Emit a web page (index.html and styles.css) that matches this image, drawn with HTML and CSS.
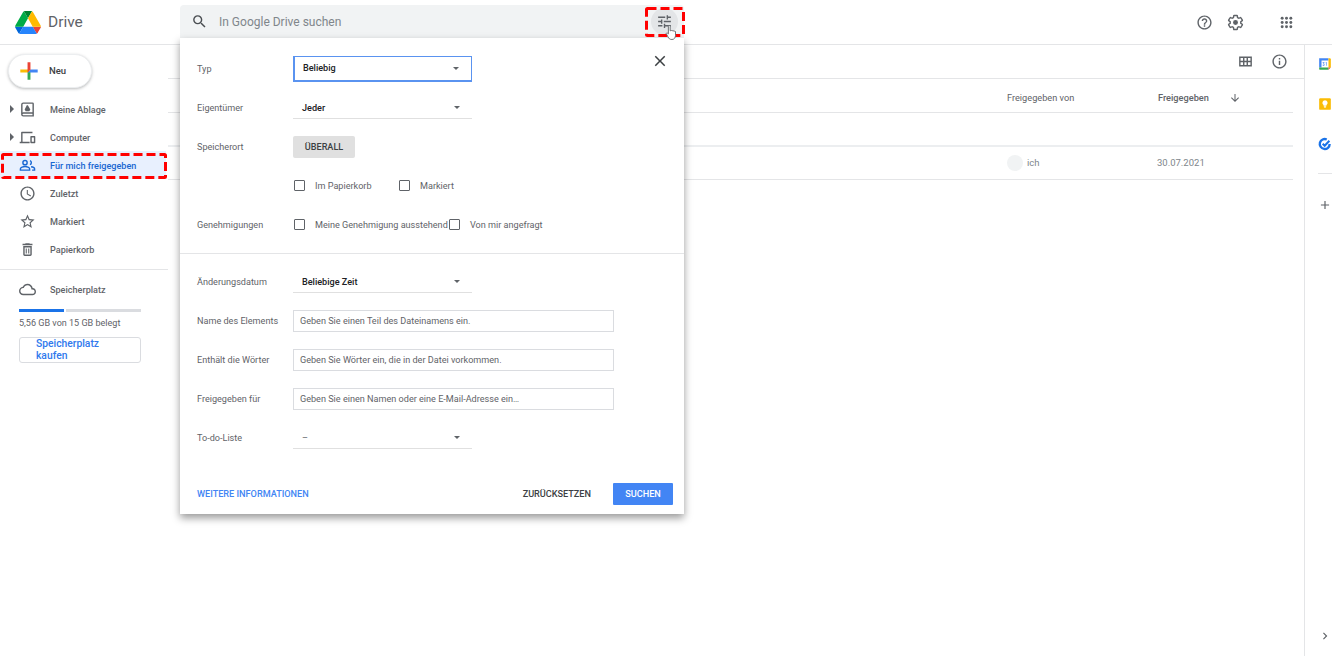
FILE: index.html
```html
<!DOCTYPE html>
<html lang="de">
<head>
  <meta charset="UTF-8">
  <title>Google Drive</title>
  <link rel="stylesheet" href="styles.css">
</head>
<body>
  <div class="app">
    <header class="topbar">
      <div class="brand">
        <svg class="logo" viewBox="0 0 87.3 78">
          <path d="m6.6 66.85 3.85 6.65c.8 1.4 1.95 2.5 3.3 3.3l13.75-23.8h-27.5c0 1.55.4 3.1 1.2 4.5z" fill="#0066da"/>
          <path d="m43.65 25-13.75-23.8c-1.35.8-2.5 1.9-3.3 3.3l-25.4 44a9.06 9.06 0 0 0 -1.2 4.5h27.5z" fill="#00ac47"/>
          <path d="m73.55 76.8c1.35-.8 2.5-1.9 3.3-3.3l1.6-2.75 7.65-13.25c.8-1.4 1.2-2.95 1.2-4.5h-27.502l5.852 11.5z" fill="#ea4335"/>
          <path d="m43.65 25 13.75-23.8c-1.35-.8-2.9-1.2-4.5-1.2h-18.5c-1.6 0-3.15.45-4.5 1.2z" fill="#00832d"/>
          <path d="m59.8 53h-32.3l-13.75 23.8c1.35.8 2.9 1.2 4.5 1.2h50.8c1.6 0 3.15-.45 4.5-1.2z" fill="#2684fc"/>
          <path d="m73.4 26.5-12.7-22c-.8-1.4-1.95-2.5-3.3-3.3l-13.75 23.8 16.15 28h27.45c0-1.55-.4-3.1-1.2-4.5z" fill="#ffba00"/>
        </svg>
        <span class="brand-name">Drive</span>
      </div>
      <div class="search">
        <svg class="icon search-icon" viewBox="0 0 24 24"><path d="M15.5 14h-.79l-.28-.27A6.471 6.471 0 0 0 16 9.5 6.5 6.5 0 1 0 9.5 16c1.61 0 3.09-.59 4.23-1.57l.27.28v.79l5 4.99L20.49 19l-4.99-5zm-6 0C7.01 14 5 11.99 5 9.5S7.01 5 9.5 5 14 7.01 14 9.5 11.99 14 9.5 14z"/></svg>
        <span class="search-text">In Google Drive suchen</span>
        <div class="tune">
          <span class="tune-circle">
            <svg class="icon-tune" viewBox="0 0 24 24"><path d="M3 17v2h6v-2H3zM3 5v2h10V5H3zm10 16v-2h8v-2h-8v-2h-2v6h2zM7 9v2H3v2h4v2h2V9H7zm14 4v-2H11v2h10zm-6-4h2V7h4V5h-4V3h-2v6z"/></svg>
          </span>
        </div>
      </div>
      <div class="top-actions">
        <svg class="icon help" viewBox="0 0 24 24"><path d="M11 18h2v-2h-2v2zm1-16C6.48 2 2 6.48 2 12s4.48 10 10 10 10-4.48 10-10S17.52 2 12 2zm0 18c-4.41 0-8-3.59-8-8s3.59-8 8-8 8 3.59 8 8-3.59 8-8 8zm0-14c-2.21 0-4 1.79-4 4h2c0-1.1.9-2 2-2s2 .9 2 2c0 2-3 1.75-3 5h2c0-2.25 3-2.5 3-5 0-2.21-1.79-4-4-4z"/></svg>
        <svg class="icon gear" viewBox="0 0 24 24">
          <path fill="none" stroke="#5f6368" stroke-width="2" d="M19.43 12.98c.04-.32.07-.64.07-.98s-.03-.66-.07-.98l2.11-1.65c.19-.15.24-.42.12-.64l-2-3.46c-.12-.22-.39-.3-.61-.22l-2.49 1c-.52-.4-1.08-.73-1.69-.98l-.38-2.65C14.46 2.18 14.25 2 14 2h-4c-.25 0-.46.18-.49.42l-.38 2.65c-.61.25-1.17.59-1.69.98l-2.49-1c-.23-.09-.49 0-.61.22l-2 3.46c-.13.22-.07.49.12.64l2.11 1.65c-.04.32-.07.65-.07.98s.03.66.07.98l-2.11 1.65c-.19.15-.24.42-.12.64l2 3.46c.12.22.39.3.61.22l2.49-1c.52.4 1.08.73 1.69.98l.38 2.65c.03.24.24.42.49.42h4c.25 0 .46-.18.49-.42l.38-2.65c.61-.25 1.17-.59 1.69-.98l2.49 1c.23.09.49 0 .61-.22l2-3.46c.12-.22.07-.49-.12-.64l-2.11-1.65z"/>
          <circle cx="12" cy="12" r="3.5"/>
        </svg>
        <svg class="icon apps" viewBox="0 0 24 24">
          <circle cx="4" cy="4" r="2.7"/><circle cx="12" cy="4" r="2.7"/><circle cx="20" cy="4" r="2.7"/>
          <circle cx="4" cy="12" r="2.7"/><circle cx="12" cy="12" r="2.7"/><circle cx="20" cy="12" r="2.7"/>
          <circle cx="4" cy="20" r="2.7"/><circle cx="12" cy="20" r="2.7"/><circle cx="20" cy="20" r="2.7"/>
        </svg>
      </div>
    </header>

    <div class="workspace">
      <aside class="sidebar">
        <button class="new-btn">
          <svg class="plus" viewBox="0 0 36 36">
            <path fill="#34a853" d="M16 16v14h4V20z"/>
            <path fill="#4285f4" d="M30 16H20l-4 4h14z"/>
            <path fill="#fbbc05" d="M6 16v4h10l4-4z"/>
            <path fill="#ea4335" d="M20 16V6h-4v14z"/>
          </svg>
          <span>Neu</span>
        </button>
        <nav class="nav">
          <div class="nav-item has-caret">
            <svg class="icon-nav" viewBox="0 0 24 24"><path d="M19 2H6a3 3 0 0 0-3 3v14a3 3 0 0 0 3 3h15V4a2 2 0 0 0-2-2zm0 18H6a1 1 0 0 1 0-2h13v2zm0-4H6a3 3 0 0 0-1 .2V5a1 1 0 0 1 1-1h13v12zM12.5 6l3.5 6-1.5 2.5h-5L8 12l3-6h1.5z"/></svg>
            <span>Meine Ablage</span>
          </div>
          <div class="nav-item has-caret">
            <svg class="icon-nav" viewBox="0 0 24 24"><path d="M1 20v-2h2V5a1 1 0 0 1 1-1h15v2H5v12h10v2H1zm16-10a1 1 0 0 0-1 1v8a1 1 0 0 0 1 1h5a1 1 0 0 0 1-1v-8a1 1 0 0 0-1-1h-5zm1 2h3v6h-3v-6z"/></svg>
            <span>Computer</span>
          </div>
          <div class="nav-item active">
            <svg class="icon-nav" viewBox="0 0 24 24">
              <circle cx="8.5" cy="8" r="3" fill="none" stroke="#1967d2" stroke-width="2"/>
              <path fill="none" stroke="#1967d2" stroke-width="2" d="M2 18.500v-2c0-1.800 4-3 6.500-3s6.500 1.200 6.500 3v2zM15.500 5.200a3 3 0 0 1 0 5.600M17 13.700c2.500.3 5 1.300 5 2.800v2h-3.500"/>
            </svg>
            <span>Für mich freigegeben</span>
          </div>
          <div class="nav-item">
            <svg class="icon-nav" viewBox="0 0 24 24"><path d="M11.990 2C6.470 2 2 6.480 2 12s4.470 10 9.990 10C17.520 22 22 17.520 22 12S17.520 2 11.990 2zM12 20c-4.420 0-8-3.580-8-8s3.580-8 8-8 8 3.580 8 8-3.580 8-8 8zm.500-13H11v6l5.250 3.150.750-1.230-4.500-2.670z"/></svg>
            <span>Zuletzt</span>
          </div>
          <div class="nav-item">
            <svg class="icon-nav" viewBox="0 0 24 24"><path d="M22 9.240l-7.190-.620L12 2 9.190 8.630 2 9.240l5.460 4.730L5.820 21 12 17.270 18.180 21l-1.630-7.030L22 9.240zM12 15.400l-3.760 2.270 1-4.280-3.320-2.880 4.380-.380L12 6.100l1.710 4.040 4.380.380-3.320 2.880 1 4.280L12 15.400z"/></svg>
            <span>Markiert</span>
          </div>
          <div class="nav-item">
            <svg class="icon-nav" viewBox="0 0 24 24"><path d="M6 19c0 1.100.900 2 2 2h8c1.100 0 2-.900 2-2V7H6v12zM8 9h8v10H8V9zm7.500-5l-1-1h-5l-1 1H5v2h14V4zM9.500 10.500h1.500v7H9.500zM13 10.500h1.500v7H13z"/></svg>
            <span>Papierkorb</span>
          </div>
        </nav>
        <div class="storage">
          <div class="storage-head">
            <svg class="icon-nav" viewBox="0 0 24 24"><path d="M19.350 10.040C18.670 6.590 15.640 4 12 4 9.110 4 6.600 5.640 5.350 8.040 2.340 8.360 0 10.910 0 14c0 3.310 2.690 6 6 6h13c2.760 0 5-2.240 5-5 0-2.640-2.050-4.780-4.650-4.960zM19 18H6c-2.210 0-4-1.790-4-4s1.790-4 4-4h.710C7.370 7.690 9.480 6 12 6c3.040 0 5.500 2.460 5.500 5.500v.500H19c1.660 0 3 1.340 3 3s-1.340 3-3 3z"/></svg>
            <span>Speicherplatz</span>
          </div>
          <div class="storage-bar"><div class="storage-used"></div></div>
          <div class="storage-text">5,56 GB von 15 GB belegt</div>
          <button class="buy-btn">Speicherplatz kaufen</button>
        </div>
      </aside>

      <main class="main">
        <div class="toolbar">
          <svg class="icon grid-icon" viewBox="0 0 24 24"><path d="M3 5v14h18V5H3zm2 2h3.500v4H5V7zm5.500 0h3v4h-3V7zm5 0H19v4h-3.500V7zM5 13h3.500v4H5v-4zm5.500 0h3v4h-3v-4zm5 0H19v4h-3.500v-4z"/></svg>
          <svg class="icon info-icon" viewBox="0 0 24 24"><path d="M11 7h2v2h-2zm0 4h2v6h-2zm1-9C6.480 2 2 6.480 2 12s4.480 10 10 10 10-4.480 10-10S17.520 2 12 2zm0 18c-4.410 0-8-3.590-8-8s3.590-8 8-8 8 3.590 8 8-3.590 8-8 8z"/></svg>
        </div>
        <div class="table">
          <div class="row head">
            <span class="col-by">Freigegeben von</span>
            <span class="col-date strong">Freigegeben</span>
            <svg class="arrow" viewBox="0 0 24 24"><path d="M20 12l-1.410-1.410L13 16.170V4h-2v12.170l-5.580-5.590L4 12l8 8 8-8z"/></svg>
          </div>
          <div class="row blank"></div>
          <div class="row file">
            <span class="col-by owner"><i class="avatar"></i><span class="cell-text">ich</span></span>
            <span class="col-date cell-text">30.07.2021</span>
          </div>
        </div>
      </main>

      <aside class="addons">
        <svg class="addon" viewBox="0 0 24 24">
          <path fill="#fff" d="M5 5h14v14H5z"/>
          <path fill="#4285f4" d="M2 2h16v4H6v12H2z"/>
          <path fill="#fbbc04" d="M18 2h2a2 2 0 0 1 2 2v14h-4z"/>
          <path fill="#34a853" d="M6 18h12v4H4a2 2 0 0 1-2-2v-2h4z"/>
          <path fill="#ea4335" d="M18 18h4l-4 4z"/>
          <path fill="#4285f4" d="M8 9h3v1.200l-1.300 1.300c1 .1 1.500.8 1.500 1.600 0 1-.800 1.700-1.800 1.700-.800 0-1.500-.400-1.700-1.200l.900-.300c.1.400.400.600.800.600s.800-.300.800-.800-.400-.800-1-.800h-.500v-.900l1.200-1.200H8zM14 9h1v6h-1v-4.700l-1 .400v-.900z"/>
        </svg>
        <svg class="addon" viewBox="0 0 24 24">
          <path fill="#fbbc04" d="M4 2h16a2 2 0 0 1 2 2v16a2 2 0 0 1-2 2H4a2 2 0 0 1-2-2V4a2 2 0 0 1 2-2z"/>
          <path fill="#fff" d="M12 5.500a4.500 4.500 0 0 0-2.500 8.200V15h5v-1.300A4.500 4.500 0 0 0 12 5.500zM10 16h4v1.500h-4zM11 18h2v1h-2z"/>
        </svg>
        <svg class="addon" viewBox="0 0 24 24">
          <path fill="none" stroke="#1a73e8" stroke-width="4" d="M20 12a8.500 8.500 0 1 1-5-7.700"/>
          <path fill="none" stroke="#1a73e8" stroke-width="3.500" d="M8 11.500l3.500 3.500 8-8.500"/>
        </svg>
        <div class="addon-sep"></div>
        <svg class="addon add" viewBox="0 0 24 24"><path d="M19 13h-6v6h-2v-6H5v-2h6V5h2v6h6z"/></svg>
        <svg class="addon expand" viewBox="0 0 24 24"><path d="M8.590 16.590L13.170 12 8.590 7.410 10 6l6 6-6 6z"/></svg>
      </aside>
    </div>

    <section class="dialog">
      <button class="dialog-close">
        <svg viewBox="0 0 24 24"><path d="M19 6.410L17.590 5 12 10.590 6.410 5 5 6.410 10.590 12 5 17.590 6.410 19 12 13.410 17.590 19 19 17.590 13.410 12z"/></svg>
      </button>
      <div class="form-top">
        <div class="form-row">
          <label>Typ</label>
          <div class="select focused"><b>Beliebig</b><i class="caret"></i></div>
        </div>
        <div class="form-row">
          <label>Eigentümer</label>
          <div class="select"><b>Jeder</b><i class="caret"></i></div>
        </div>
        <div class="form-row">
          <label>Speicherort</label>
          <button class="place-btn">ÜBERALL</button>
        </div>
        <div class="form-row">
          <label></label>
          <span class="check check-wide"><i class="box"></i>Im Papierkorb</span>
          <span class="check"><i class="box"></i>Markiert</span>
        </div>
        <div class="form-row">
          <label>Genehmigungen</label>
          <span class="check tight"><i class="box"></i>Meine Genehmigung ausstehend</span>
          <span class="check"><i class="box"></i>Von mir angefragt</span>
        </div>
      </div>
      <div class="form-bottom">
        <div class="form-row">
          <label>Änderungsdatum</label>
          <div class="select"><b>Beliebige Zeit</b><i class="caret"></i></div>
        </div>
        <div class="form-row">
          <label>Name des Elements</label>
          <div class="text-input">Geben Sie einen Teil des Dateinamens ein.</div>
        </div>
        <div class="form-row">
          <label>Enthält die Wörter</label>
          <div class="text-input">Geben Sie Wörter ein, die in der Datei vorkommen.</div>
        </div>
        <div class="form-row">
          <label>Freigegeben für</label>
          <div class="text-input">Geben Sie einen Namen oder eine E-Mail-Adresse ein…</div>
        </div>
        <div class="form-row">
          <label>To-do-Liste</label>
          <div class="select"><span class="dash">–</span><i class="caret"></i></div>
        </div>
      </div>
      <div class="dialog-foot">
        <a class="more">WEITERE INFORMATIONEN</a>
        <a class="reset">ZURÜCKSETZEN</a>
        <button class="submit">SUCHEN</button>
      </div>
    </section>

    <!-- annotations from the screenshot -->
    <svg class="mark mark-tune" viewBox="0 0 40 30"><rect x="1.500" y="1.500" width="37" height="27" rx="1"/></svg>
    <svg class="mark mark-nav" viewBox="0 0 166 26"><rect x="1.500" y="1.500" width="163" height="23" rx="1"/></svg>
    <svg class="hand" viewBox="0 0 14 18">
      <path fill="#fff" stroke="#5f6368" stroke-width="1" d="M3.500 1.500a1 1 0 0 1 2 0v5l1.500-.300 1.500.300 1.500.300 1.500.500v4.500c0 2.500-1.500 4.500-4 4.500s-3.500-1-4.500-3L1 9.500c.5-1 1.500-.500 2.500.500z"/>
    </svg>
  </div>
</body>
</html>
```

FILE: styles.css
```css
* {
  box-sizing: border-box;
}
body {
  margin: 0;
  font-family: Roboto, "Liberation Sans", sans-serif;
  font-size: 10px;
  color: #5f6368;
  background: #fff;
}
button {
  font-family: inherit;
  padding: 0;
}
.app {
  position: relative;
  width: 1332px;
  height: 656px;
  overflow: hidden;
  display: flex;
  flex-direction: column;
}
.icon {
  fill: #5f6368;
  display: block;
}

/* top bar */
.topbar {
  height: 45px;
  flex: none;
  display: flex;
  align-items: flex-start;
  border-bottom: 1px solid #e4e5e7;
}
.brand {
  width: 180px;
  height: 44px;
  padding-left: 15px;
  display: flex;
  align-items: center;
  gap: 7px;
}
.logo {
  width: 26px;
  height: 23px;
}
.brand-name {
  font-size: 15.5px;
  color: #5f6368;
}
.search {
  width: 504px;
  height: 33px;
  margin-top: 5px;
  background: #f1f3f4;
  border-radius: 4px 4px 0 0;
  display: flex;
  align-items: center;
  padding-left: 11px;
}
.search-icon {
  width: 17px;
  height: 17px;
  fill: #4a4e52;
}
.search-text {
  margin-left: 11px;
  font-size: 12px;
  color: #80868b;
}
.tune {
  margin-left: auto;
  width: 39px;
  height: 29px;
  display: flex;
  align-items: center;
  justify-content: center;
}
.tune-circle {
  width: 27px;
  height: 27px;
  border-radius: 50%;
  background: #e3e5e7;
  display: flex;
  align-items: center;
  justify-content: center;
}
.icon-tune {
  width: 17px;
  height: 17px;
  fill: #5f6368;
}
.top-actions {
  margin-left: auto;
  width: 136px;
  height: 44px;
  display: flex;
  align-items: center;
}
.help {
  width: 17px;
  height: 17px;
}
.gear {
  width: 17px;
  height: 17px;
  margin-left: 14px;
}
.apps {
  width: 13px;
  height: 13px;
  margin-left: 36px;
}

/* layout below the bar */
.workspace {
  flex: 1;
  display: flex;
  min-height: 0;
}
.sidebar {
  width: 168px;
  flex: none;
  padding-top: 9px;
}
.new-btn {
  margin-left: 8px;
  width: 84px;
  height: 34px;
  border: 1px solid #eceef0;
  border-radius: 17px;
  background: #fff;
  box-shadow: 0 1px 3px rgba(60, 64, 67, .35);
  display: flex;
  align-items: center;
  padding-left: 7px;
  gap: 7px;
  font-size: 9.5px;
  font-weight: 500;
  color: #3c4043;
}
.new-btn span {
  padding-bottom: 2px;
}
.plus {
  width: 26px;
  height: 26px;
}
.nav {
  margin-top: 7px;
  padding-bottom: 6px;
  border-bottom: 1px solid #e4e5e7;
}
.nav-item {
  position: relative;
  height: 28px;
  display: flex;
  align-items: center;
  padding-left: 19px;
  font-weight: 500;
  font-size: 9.1px;
  color: #5f6368;
}
.nav-item span,
.storage-head span {
  padding-top: 2px;
}
.icon-nav {
  width: 17px;
  height: 17px;
  margin-right: 14px;
  fill: #5f6368;
  flex: none;
}
.has-caret::before {
  content: "";
  position: absolute;
  left: 10px;
  top: 10px;
  border-left: 4px solid #5f6368;
  border-top: 4px solid transparent;
  border-bottom: 4px solid transparent;
}
.nav-item.active {
  background: #e8f0fe;
  color: #1967d2;
  margin-right: 2px;
}
.active .icon-nav {
  fill: none;
}
.storage {
  padding: 5px 0 0 19px;
}
.storage-head {
  display: flex;
  align-items: center;
  height: 28px;
  font-weight: 500;
  font-size: 9.1px;
}
.storage-bar {
  width: 122px;
  height: 3px;
  margin-top: 6px;
  background: #dadce0;
}
.storage-used {
  width: 47px;
  height: 3px;
  background: #1a73e8;
  border-right: 2px solid #fff;
}
.storage-text {
  margin-top: 5px;
  font-size: 9.05px;
  line-height: 12px;
}
.buy-btn {
  display: block;
  width: 122px;
  height: 26px;
  margin-top: 8px;
  padding: 0 16px;
  background: #fff;
  border: 1px solid #dadce0;
  border-radius: 3px;
  color: #3079ed;
  font-size: 10.3px;
  font-weight: 500;
  line-height: 12px;
  text-align: left;
}

/* file list, the left part sits behind the dialog */
.main {
  flex: 1;
  border-right: 1px solid #e4e5e7;
}
.toolbar {
  height: 34px;
  border-bottom: 1px solid #e4e5e7;
  display: flex;
  align-items: center;
  justify-content: flex-end;
  padding-right: 16px;
}
.grid-icon {
  width: 17px;
  height: 17px;
}
.info-icon {
  width: 17px;
  height: 17px;
  margin-left: 17px;
}
.table {
  width: 1125px;
}
.row {
  height: 34px;
  display: flex;
  align-items: center;
  border-bottom: 1px solid #e4e5e7;
  padding-left: 839px;
  font-size: 9.2px;
}
.head {
  padding-top: 4px;
}
.blank {
  border-bottom: 2px solid #eceef0;
}
.file {
  height: 33px;
  color: #80868b;
  font-size: 9.5px;
}
.file .col-by {
  width: 150px;
}
.cell-text {
  padding-bottom: 2px;
}
.col-by {
  width: 151px;
  display: flex;
  align-items: center;
}
.strong {
  font-weight: 500;
}
.col-date {
  width: 71px;
}
.arrow {
  width: 12px;
  height: 12px;
  fill: #5f6368;
}
.avatar {
  width: 16px;
  height: 16px;
  border-radius: 50%;
  background: #f1f3f4;
  margin-right: 4px;
}

/* right strip */
.addons {
  width: 27px;
  flex: none;
  display: flex;
  flex-direction: column;
  padding: 12px 0 0 13px;
  overflow: hidden;
}
.addon {
  width: 14px;
  height: 14px;
  flex: none;
  margin-bottom: 26px;
}
.addon-sep {
  width: 14px;
  height: 1px;
  background: #e4e5e7;
  margin: -4px 0 24px;
}
.add {
  fill: #5f6368;
}
.expand {
  fill: #5f6368;
  margin-top: auto;
  margin-bottom: 13px;
}

/* search options dialog */
.dialog {
  position: absolute;
  left: 180px;
  top: 38px;
  width: 504px;
  height: 476px;
  background: #fff;
  box-shadow: 0 4px 8px rgba(0, 0, 0, .4);
  display: flex;
  flex-direction: column;
}
.dialog-close {
  position: absolute;
  right: 15px;
  top: 14px;
  width: 18px;
  height: 18px;
  border: 0;
  background: none;
}
.dialog-close svg {
  display: block;
  fill: #3c4043;
}
.form-top {
  padding: 11px 0 9px;
  border-bottom: 1px solid #e4e5e7;
}
.form-bottom {
  padding-top: 8px;
}
.form-row {
  height: 39px;
  display: flex;
  align-items: center;
  padding-left: 17px;
  font-size: 9.1px;
  white-space: nowrap;
}
.form-row label {
  width: 96px;
  flex: none;
}
.select {
  position: relative;
  width: 179px;
  height: 23px;
  display: flex;
  align-items: center;
  padding: 2px 0 0 9px;
  border-bottom: 1px solid #e0e0e0;
}
.select b {
  font-weight: 500;
  color: #202124;
}
.focused {
  height: 26px;
  border: 1px solid #5a93f0;
  border-left-width: 2px;
  border-bottom-width: 2px;
  padding: 0 0 0 8px;
}
.caret {
  position: absolute;
  right: 12px;
  top: 10px;
  border-top: 3.500px solid #5f6368;
  border-left: 3.500px solid transparent;
  border-right: 3.500px solid transparent;
}
.place-btn {
  width: 62px;
  height: 22px;
  border: 0;
  background: #e0e0e0;
  border-radius: 2px;
  font-size: 9.1px;
  font-weight: 500;
  color: #3c4043;
}
.check {
  display: flex;
  align-items: center;
}
.check-wide {
  width: 105px;
}
.tight {
  width: 155px;
}
.box {
  width: 11px;
  height: 11px;
  margin: 0 10px 0 1px;
  border: 1.5px solid #5f6368;
  border-radius: 1px;
  flex: none;
}
.text-input {
  width: 321px;
  height: 22px;
  border: 1px solid #dadce0;
  padding-left: 6px;
  display: flex;
  align-items: center;
}
.dash {
  color: #5f6368;
}
.dialog-foot {
  margin-top: auto;
  height: 22px;
  margin-bottom: 9px;
  display: flex;
  align-items: center;
  padding: 0 11px 0 17px;
  font-size: 9.15px;
  font-weight: 500;
}
.more {
  color: #4285f4;
}
.reset {
  margin-left: auto;
  color: #3c4043;
}
.submit {
  width: 60px;
  height: 22px;
  margin-left: 22px;
  border: 0;
  border-radius: 1px;
  background: #4285f4;
  color: #fff;
  font-size: 9.15px;
  font-weight: 500;
}

/* red dashed marks and the cursor */
.mark {
  position: absolute;
}
.mark rect {
  fill: none;
  stroke: #f00;
  stroke-width: 3;
  stroke-dasharray: 9 4;
}
.mark-tune {
  left: 645px;
  top: 7px;
  width: 40px;
  height: 30px;
}
.mark-nav {
  left: 1px;
  top: 153px;
  width: 166px;
  height: 26px;
}
.hand {
  position: absolute;
  left: 665px;
  top: 25px;
  width: 13px;
  height: 16px;
}
```
